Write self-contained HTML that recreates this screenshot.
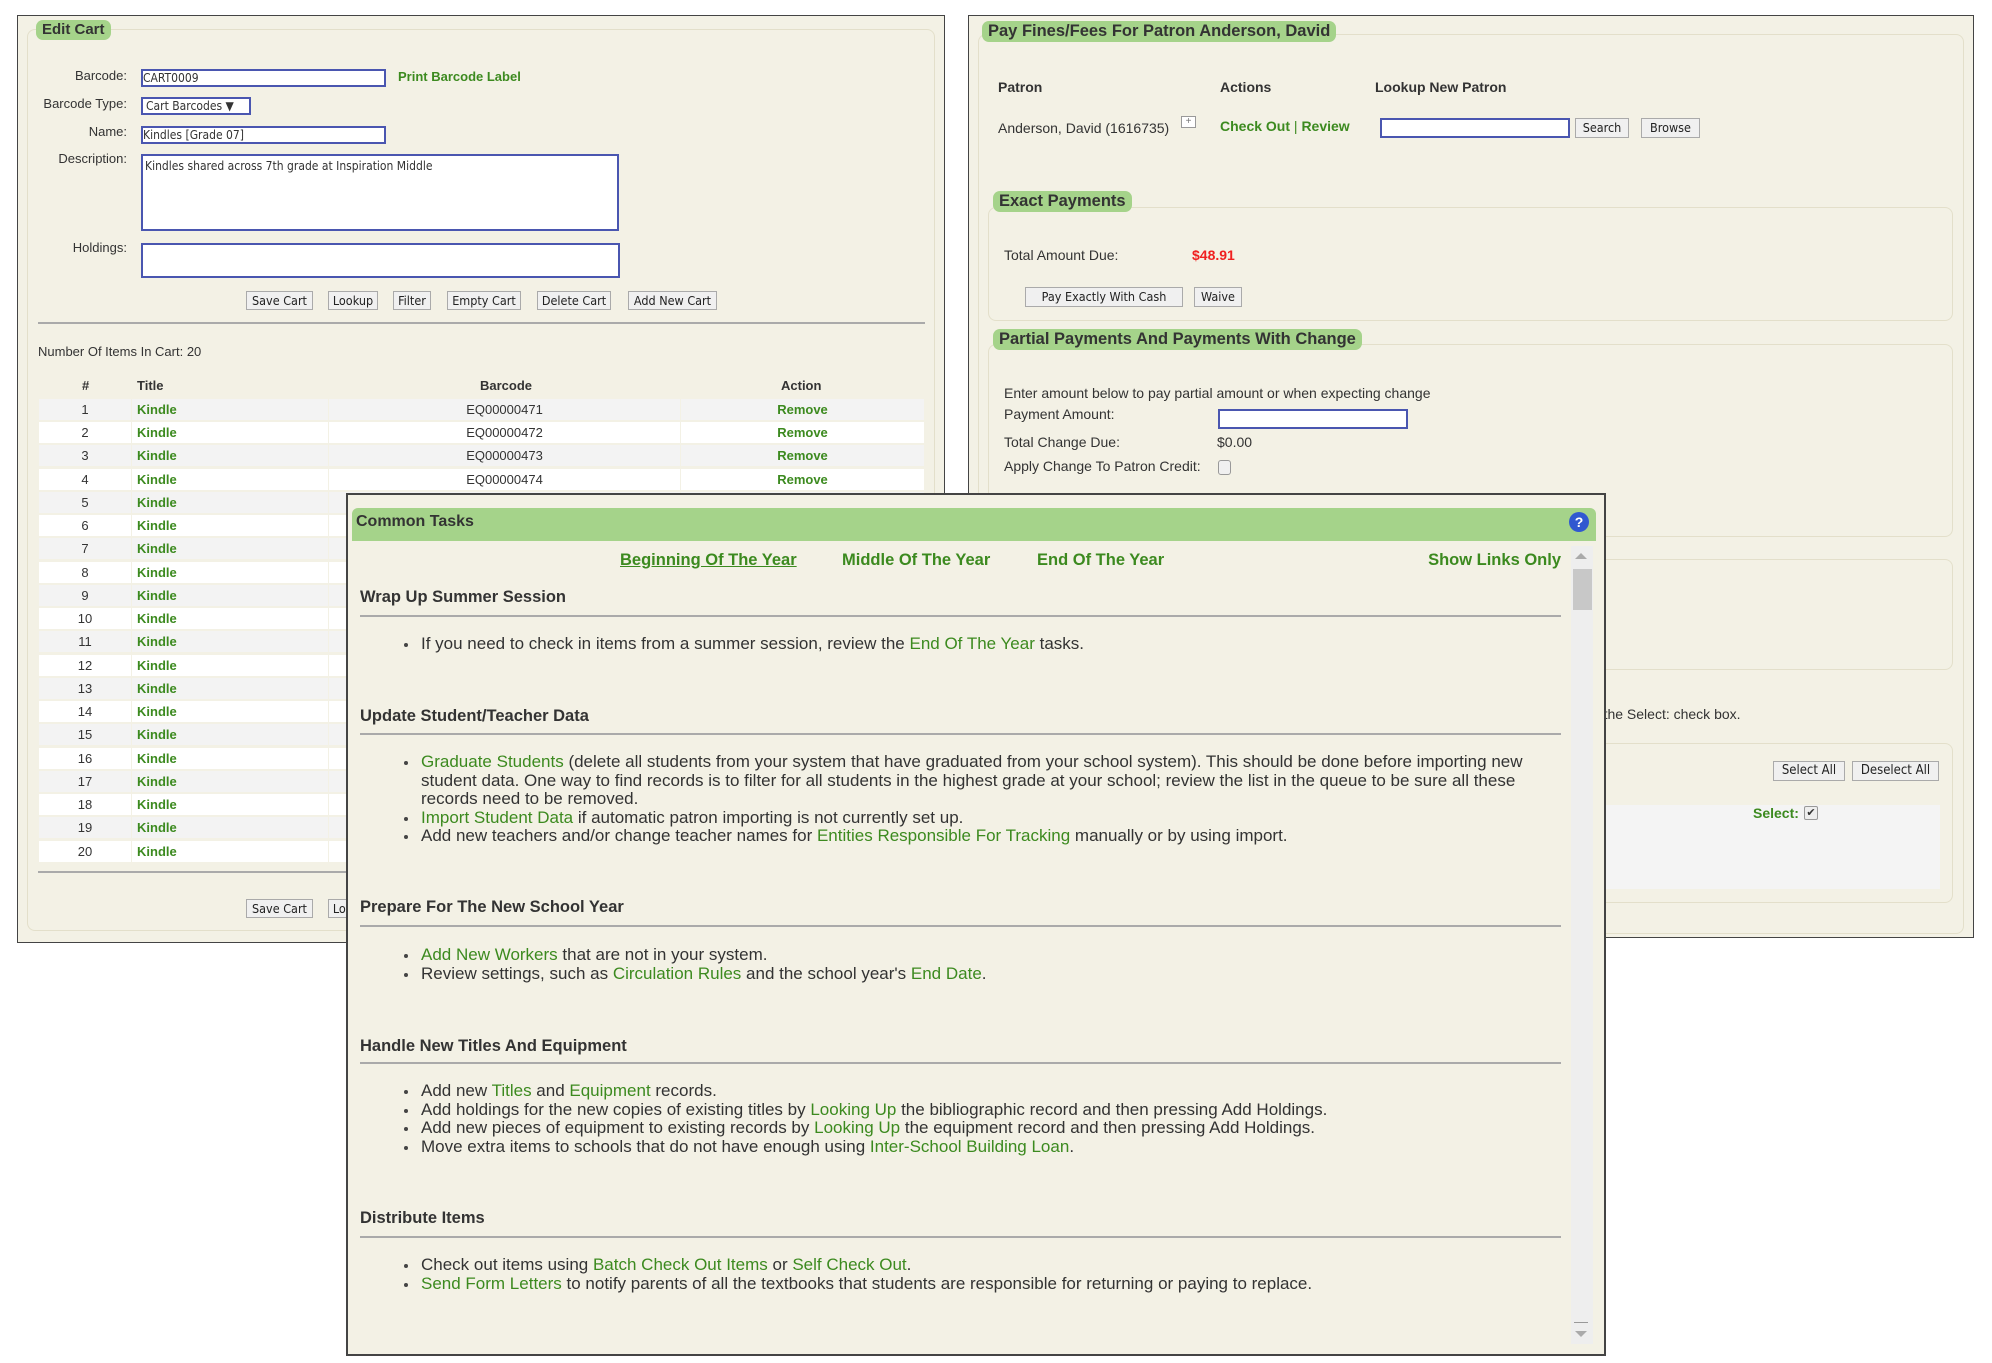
<!DOCTYPE html>
<html><head><meta charset="utf-8">
<style>
*{margin:0;padding:0;box-sizing:border-box}
body{width:1992px;height:1363px;background:#fff;position:relative;overflow:hidden;font-family:"Liberation Sans",Arial,sans-serif;color:#333}
.a{position:absolute}
.t{position:absolute;white-space:nowrap;font-size:13px;line-height:16px}
.g{color:#3c8a1f}
.gb{color:#3c8a1f;font-weight:bold}
.panel{position:absolute;background:#f3f1e5;border:1px solid #444}
.fs{position:absolute;border:1px solid #e3dfca;border-radius:8px}
.lg{position:absolute;background:#a5d38a;border-radius:7px;font-weight:bold;font-size:16.5px;line-height:21px;padding:0 6px;color:#333;white-space:nowrap}
.inp{position:absolute;background:#fff;border:2px solid #4a56b0}
.btn{position:absolute;background:#f0f0f0;border:1px solid #aaa;font-family:"DejaVu Sans Condensed","DejaVu Sans",sans-serif;font-size:12.5px;line-height:17px;text-align:center;color:#222;white-space:nowrap}
.hr{position:absolute;height:2px;background:#aaa}
.row{position:absolute;left:39px;width:885px;height:21px}
.c{position:absolute;top:0;height:21px;font-size:13px;line-height:21px}
.c1{left:0;width:92px;text-align:center}
.c2{left:93px;width:196px;padding-left:5px;color:#3c8a1f;font-weight:bold}
.c3{left:290px;width:351px;text-align:center}
.c4{left:642px;width:243px;text-align:center;color:#3c8a1f;font-weight:bold}
.o .c{background:#f3f3f3}
.e .c{background:#fff}
.h{position:absolute;left:360px;font-size:16.5px;font-weight:bold;white-space:nowrap;color:#333}
.ul{position:absolute;left:421px;list-style:none;font-size:17px;line-height:18.5px;width:1140px}
.ul li{position:relative}
.ul li:before{content:"";position:absolute;left:-17px;top:8px;width:4px;height:4px;background:#444;border-radius:50%}
</style></head><body>

<!-- LEFT PANEL -->
<div class="panel" style="left:17px;top:15px;width:928px;height:928px"></div>
<div class="fs" style="left:27px;top:29px;width:908px;height:902px"></div>
<div class="lg" style="left:36px;top:20px;font-size:15px;line-height:20px">Edit Cart</div>
<div class="t" style="right:1865px;top:68px">Barcode:</div>
<div class="t" style="right:1865px;top:96px">Barcode Type:</div>
<div class="t" style="right:1865px;top:124px">Name:</div>
<div class="t" style="right:1865px;top:151px">Description:</div>
<div class="t" style="right:1865px;top:240px">Holdings:</div>
<div class="inp" style="left:141px;top:69px;width:245px;height:18px"></div>
<div class="t" style="left:143px;top:70px;font-family:'DejaVu Sans Condensed',sans-serif;font-size:12px">CART0009</div>
<div class="t gb" style="left:398px;top:69px">Print Barcode Label</div>
<div class="inp" style="left:141px;top:97px;width:110px;height:18px"></div>
<div class="t" style="left:146px;top:98px;font-family:'DejaVu Sans Condensed',sans-serif;font-size:12px">Cart Barcodes ▼</div>
<div class="inp" style="left:141px;top:126px;width:245px;height:18px"></div>
<div class="t" style="left:143px;top:127px;font-family:'DejaVu Sans Condensed',sans-serif;font-size:12px">Kindles [Grade 07]</div>
<div class="inp" style="left:141px;top:154px;width:478px;height:77px"></div>
<div class="t" style="left:145px;top:158px;font-family:'DejaVu Sans Condensed',sans-serif;font-size:12px">Kindles shared across 7th grade at Inspiration Middle</div>
<div class="inp" style="left:141px;top:243px;width:479px;height:35px"></div>
<div class="btn" style="left:246px;top:291px;width:67px;height:19px">Save Cart</div>
<div class="btn" style="left:328px;top:291px;width:50px;height:19px">Lookup</div>
<div class="btn" style="left:393px;top:291px;width:38px;height:19px">Filter</div>
<div class="btn" style="left:447px;top:291px;width:74px;height:19px">Empty Cart</div>
<div class="btn" style="left:537px;top:291px;width:74px;height:19px">Delete Cart</div>
<div class="btn" style="left:628px;top:291px;width:89px;height:19px">Add New Cart</div>
<div class="hr" style="left:38px;top:322px;width:887px"></div>
<div class="t" style="left:38px;top:344px">Number Of Items In Cart: 20</div>
<div class="t" style="left:82px;top:378px;font-weight:bold">#</div>
<div class="t" style="left:137px;top:378px;font-weight:bold">Title</div>
<div class="t" style="left:480px;top:378px;font-weight:bold">Barcode</div>
<div class="t" style="left:781px;top:378px;font-weight:bold">Action</div>

<div class="row o" style="top:399px"><div class="c c1">1</div><div class="c c2">Kindle</div><div class="c c3">EQ00000471</div><div class="c c4">Remove</div></div>
<div class="row e" style="top:422px"><div class="c c1">2</div><div class="c c2">Kindle</div><div class="c c3">EQ00000472</div><div class="c c4">Remove</div></div>
<div class="row o" style="top:445px"><div class="c c1">3</div><div class="c c2">Kindle</div><div class="c c3">EQ00000473</div><div class="c c4">Remove</div></div>
<div class="row e" style="top:469px"><div class="c c1">4</div><div class="c c2">Kindle</div><div class="c c3">EQ00000474</div><div class="c c4">Remove</div></div>
<div class="row o" style="top:492px"><div class="c c1">5</div><div class="c c2">Kindle</div><div class="c c3">EQ00000475</div><div class="c c4">Remove</div></div>
<div class="row e" style="top:515px"><div class="c c1">6</div><div class="c c2">Kindle</div><div class="c c3">EQ00000476</div><div class="c c4">Remove</div></div>
<div class="row o" style="top:538px"><div class="c c1">7</div><div class="c c2">Kindle</div><div class="c c3">EQ00000477</div><div class="c c4">Remove</div></div>
<div class="row e" style="top:562px"><div class="c c1">8</div><div class="c c2">Kindle</div><div class="c c3">EQ00000478</div><div class="c c4">Remove</div></div>
<div class="row o" style="top:585px"><div class="c c1">9</div><div class="c c2">Kindle</div><div class="c c3">EQ00000479</div><div class="c c4">Remove</div></div>
<div class="row e" style="top:608px"><div class="c c1">10</div><div class="c c2">Kindle</div><div class="c c3">EQ00000480</div><div class="c c4">Remove</div></div>
<div class="row o" style="top:631px"><div class="c c1">11</div><div class="c c2">Kindle</div><div class="c c3">EQ00000481</div><div class="c c4">Remove</div></div>
<div class="row e" style="top:655px"><div class="c c1">12</div><div class="c c2">Kindle</div><div class="c c3">EQ00000482</div><div class="c c4">Remove</div></div>
<div class="row o" style="top:678px"><div class="c c1">13</div><div class="c c2">Kindle</div><div class="c c3">EQ00000483</div><div class="c c4">Remove</div></div>
<div class="row e" style="top:701px"><div class="c c1">14</div><div class="c c2">Kindle</div><div class="c c3">EQ00000484</div><div class="c c4">Remove</div></div>
<div class="row o" style="top:724px"><div class="c c1">15</div><div class="c c2">Kindle</div><div class="c c3">EQ00000485</div><div class="c c4">Remove</div></div>
<div class="row e" style="top:748px"><div class="c c1">16</div><div class="c c2">Kindle</div><div class="c c3">EQ00000486</div><div class="c c4">Remove</div></div>
<div class="row o" style="top:771px"><div class="c c1">17</div><div class="c c2">Kindle</div><div class="c c3">EQ00000487</div><div class="c c4">Remove</div></div>
<div class="row e" style="top:794px"><div class="c c1">18</div><div class="c c2">Kindle</div><div class="c c3">EQ00000488</div><div class="c c4">Remove</div></div>
<div class="row o" style="top:817px"><div class="c c1">19</div><div class="c c2">Kindle</div><div class="c c3">EQ00000489</div><div class="c c4">Remove</div></div>
<div class="row e" style="top:841px"><div class="c c1">20</div><div class="c c2">Kindle</div><div class="c c3">EQ00000490</div><div class="c c4">Remove</div></div>

<div class="hr" style="left:38px;top:871px;width:887px"></div>
<div class="btn" style="left:246px;top:899px;width:67px;height:19px">Save Cart</div>
<div class="btn" style="left:328px;top:899px;width:50px;height:19px">Lookup</div>

<!-- RIGHT PANEL -->
<div class="panel" style="left:968px;top:15px;width:1006px;height:923px"></div>
<div class="fs" style="left:978px;top:34px;width:986px;height:900px"></div>
<div class="lg" style="left:982px;top:21px">Pay Fines/Fees For Patron Anderson, David</div>
<div class="t" style="left:998px;top:79px;font-weight:bold;font-size:14px">Patron</div>
<div class="t" style="left:1220px;top:79px;font-weight:bold;font-size:14px">Actions</div>
<div class="t" style="left:1375px;top:79px;font-weight:bold;font-size:14px">Lookup New Patron</div>
<div class="t" style="left:998px;top:120px;font-size:14px">Anderson, David (1616735)</div>
<div class="a" style="left:1181px;top:116px;width:15px;height:12px;border:1px solid #999;background:#fff;font-size:10px;line-height:9px;text-align:center;color:#777">+</div>
<div class="t" style="left:1220px;top:118px;font-size:14px;font-weight:bold"><span class="g">Check Out</span> <span class="g" style="font-weight:normal">|</span> <span class="g">Review</span></div>
<div class="inp" style="left:1380px;top:118px;width:190px;height:20px"></div>
<div class="btn" style="left:1575px;top:118px;width:54px;height:20px">Search</div>
<div class="btn" style="left:1641px;top:118px;width:59px;height:20px">Browse</div>

<div class="fs" style="left:988px;top:207px;width:965px;height:114px"></div>
<div class="lg" style="left:993px;top:191px">Exact Payments</div>
<div class="t" style="left:1004px;top:247px;font-size:14px">Total Amount Due:</div>
<div class="t" style="left:1192px;top:247px;font-size:14px;color:#f02020;font-weight:bold">$48.91</div>
<div class="btn" style="left:1025px;top:287px;width:158px;height:20px">Pay Exactly With Cash</div>
<div class="btn" style="left:1194px;top:287px;width:48px;height:20px">Waive</div>

<div class="fs" style="left:988px;top:344px;width:965px;height:193px"></div>
<div class="lg" style="left:993px;top:329px">Partial Payments And Payments With Change</div>
<div class="t" style="left:1004px;top:385px;font-size:14px">Enter amount below to pay partial amount or when expecting change</div>
<div class="t" style="left:1004px;top:406px;font-size:14px">Payment Amount:</div>
<div class="inp" style="left:1218px;top:409px;width:190px;height:20px"></div>
<div class="t" style="left:1004px;top:434px;font-size:14px">Total Change Due:</div>
<div class="t" style="left:1217px;top:434px;font-size:14px">$0.00</div>
<div class="t" style="left:1004px;top:458px;font-size:14px">Apply Change To Patron Credit:</div>
<div class="a" style="left:1218px;top:460px;width:13px;height:15px;border:1px solid #999;border-radius:3px;background:#f0f0f0"></div>

<div class="fs" style="left:988px;top:559px;width:965px;height:111px"></div>
<div class="t" style="left:1560px;top:706px;font-size:14px">Check the Select: check box.</div>
<div class="fs" style="left:988px;top:743px;width:965px;height:160px"></div>
<div class="btn" style="left:1773px;top:761px;width:72px;height:20px;font-size:13px">Select All</div>
<div class="btn" style="left:1852px;top:761px;width:87px;height:20px;font-size:13px">Deselect All</div>
<div class="a" style="left:1000px;top:805px;width:940px;height:84px;background:#f4f4f4"></div>
<div class="t gb" style="left:1753px;top:805px;font-size:14px">Select:</div>
<div class="a" style="left:1804px;top:806px;width:14px;height:14px;border:1px solid #999;border-radius:2px;background:#eee;font-size:11px;line-height:12px;text-align:center">✔</div>

<!-- DIALOG -->
<div class="a" style="left:346px;top:493px;width:1260px;height:863px;background:#f3f1e5;border:2px solid #444"></div>
<div class="a" style="left:352px;top:508px;width:1244px;height:33px;background:#a5d38a;border-radius:6px 6px 0 0"></div>
<div class="t" style="left:356px;top:512px;font-size:16px;line-height:20px;color:#333;font-weight:bold">Common Tasks</div>
<div class="a" style="left:1569px;top:512px;width:20px;height:20px;border-radius:50%;background:#3058d0;color:#fff;font-weight:bold;font-size:14px;line-height:20px;text-align:center">?</div>
<div class="a" style="left:1571px;top:546px;width:22px;height:798px;background:#eeeeee"></div>
<div class="a" style="left:1575px;top:553px;width:0;height:0;border-left:6px solid transparent;border-right:6px solid transparent;border-bottom:6px solid #aaa"></div>
<div class="a" style="left:1573px;top:569px;width:19px;height:41px;background:#c8c8c8"></div>
<div class="a" style="left:1575px;top:1331px;width:0;height:0;border-left:6px solid transparent;border-right:6px solid transparent;border-top:6px solid #aaa"></div>
<div class="a" style="left:1574px;top:1322px;width:14px;height:1px;background:#999"></div>

<div class="t gb" style="left:620px;top:551px;font-size:16.5px;line-height:18px;text-decoration:underline">Beginning Of The Year</div>
<div class="t gb" style="left:842px;top:551px;font-size:16.5px;line-height:18px">Middle Of The Year</div>
<div class="t gb" style="left:1037px;top:551px;font-size:16.5px;line-height:18px">End Of The Year</div>
<div class="t gb" style="right:431px;top:551px;font-size:16.5px;line-height:18px">Show Links Only</div>

<div class="h" style="top:588px">Wrap Up Summer Session</div>
<div class="hr" style="left:360px;top:615px;width:1201px"></div>
<ul class="ul" style="top:635px"><li>If you need to check in items from a summer session, review the <span class="g">End Of The Year</span> tasks.</li></ul>

<div class="h" style="top:707px">Update Student/Teacher Data</div>
<div class="hr" style="left:360px;top:733px;width:1201px"></div>
<ul class="ul" style="top:753px"><li><span class="g">Graduate Students</span> (delete all students from your system that have graduated from your school system). This should be done before importing new student data. One way to find records is to filter for all students in the highest grade at your school; review the list in the queue to be sure all these records need to be removed.</li>
<li><span class="g">Import Student Data</span> if automatic patron importing is not currently set up.</li>
<li>Add new teachers and/or change teacher names for <span class="g">Entities Responsible For Tracking</span> manually or by using import.</li></ul>

<div class="h" style="top:898px">Prepare For The New School Year</div>
<div class="hr" style="left:360px;top:925px;width:1201px"></div>
<ul class="ul" style="top:946px"><li><span class="g">Add New Workers</span> that are not in your system.</li>
<li>Review settings, such as <span class="g">Circulation Rules</span> and the school year's <span class="g">End Date</span>.</li></ul>

<div class="h" style="top:1037px">Handle New Titles And Equipment</div>
<div class="hr" style="left:360px;top:1062px;width:1201px"></div>
<ul class="ul" style="top:1082px"><li>Add new <span class="g">Titles</span> and <span class="g">Equipment</span> records.</li>
<li>Add holdings for the new copies of existing titles by <span class="g">Looking Up</span> the bibliographic record and then pressing Add Holdings.</li>
<li>Add new pieces of equipment to existing records by <span class="g">Looking Up</span> the equipment record and then pressing Add Holdings.</li>
<li>Move extra items to schools that do not have enough using <span class="g">Inter-School Building Loan</span>.</li></ul>

<div class="h" style="top:1209px">Distribute Items</div>
<div class="hr" style="left:360px;top:1236px;width:1201px"></div>
<ul class="ul" style="top:1256px"><li>Check out items using <span class="g">Batch Check Out Items</span> or <span class="g">Self Check Out</span>.</li>
<li><span class="g">Send Form Letters</span> to notify parents of all the textbooks that students are responsible for returning or paying to replace.</li></ul>
</body></html>
